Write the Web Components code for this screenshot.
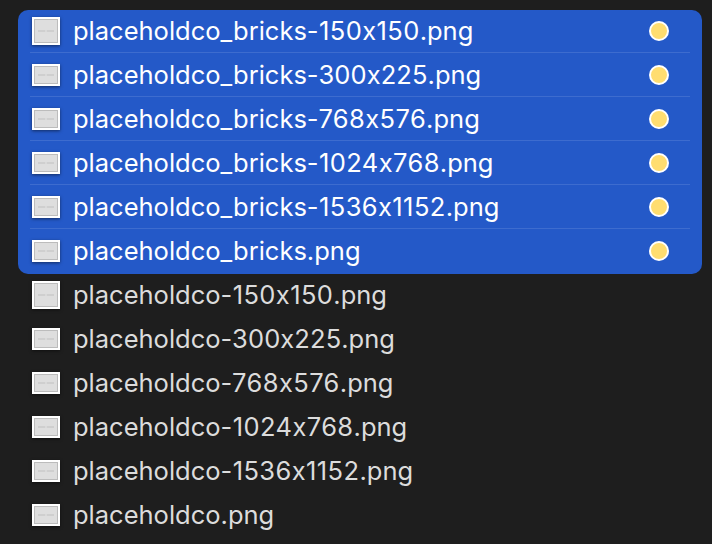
<!DOCTYPE html>
<html lang="en">
<head>
<meta charset="utf-8">
<title>Files</title>
<style>
  html, body { margin: 0; background: #1e1e1e; }
  body { font-family: "Inter", "Liberation Sans", sans-serif; overflow: hidden; }
  .dims { letter-spacing: .4px; }
</style>
</head>
<body>
<file-list>
  <file-group selected>
    <file-row shape="square" tagged>placeholdco_bricks<span class="dims">-150x150</span>.png</file-row>
    <file-row tagged>placeholdco_bricks<span class="dims" style="letter-spacing:.1px">-300x225</span>.png</file-row>
    <file-row tagged>placeholdco_bricks<span class="dims">-768x576</span>.png</file-row>
    <file-row tagged>placeholdco_bricks<span class="dims">-1024x768</span>.png</file-row>
    <file-row tagged>placeholdco_bricks<span class="dims">-1536x1152</span>.png</file-row>
    <file-row tagged last>placeholdco_bricks.png</file-row>
  </file-group>
  <file-group>
    <file-row shape="square" last>placeholdco<span class="dims">-150x150</span>.png</file-row>
    <file-row last>placeholdco<span class="dims" style="letter-spacing:.1px">-300x225</span>.png</file-row>
    <file-row last>placeholdco<span class="dims">-768x576</span>.png</file-row>
    <file-row last>placeholdco<span class="dims">-1024x768</span>.png</file-row>
    <file-row last>placeholdco<span class="dims">-1536x1152</span>.png</file-row>
    <file-row last>placeholdco.png</file-row>
  </file-group>
</file-list>
<script>
class FileList extends HTMLElement {
  constructor() {
    super();
    this.attachShadow({ mode: 'open' }).innerHTML = `
      <style>
        :host { display: block; padding: 10px 10px 0 18px; }
      </style>
      <slot></slot>`;
  }
}

class FileGroup extends HTMLElement {
  constructor() {
    super();
    this.attachShadow({ mode: 'open' }).innerHTML = `
      <style>
        :host { display: block; color: #dcdcdc; }
        :host([selected]) { background: #2459c8; border-radius: 10px; color: #fff; }
      </style>
      <slot></slot>`;
  }
}

class FileThumb extends HTMLElement {
  constructor() {
    super();
    this.attachShadow({ mode: 'open' }).innerHTML = `
      <style>
        :host {
          display: flex;
          box-sizing: border-box;
          width: 28px;
          height: 22px;
          border: 2px solid #fff;
          box-shadow: 0 1px 3px rgba(0, 0, 0, .5);
        }
        :host([shape="square"]) { height: 28px; }
        .paper {
          flex: 1;
          display: flex;
          align-items: center;
          justify-content: center;
          background: #dedede;
          border: 1px solid #bcbcbc;
        }
        .mark {
          width: 16px;
          height: 2px;
          background: repeating-linear-gradient(90deg, #cfcfcf 0 7px, #d9d9d9 7px 9px);
        }
      </style>
      <div class="paper"><div class="mark"></div></div>`;
  }
}

class FileRow extends HTMLElement {
  constructor() {
    super();
    this.attachShadow({ mode: 'open' }).innerHTML = `
      <style>
        :host {
          display: flex;
          align-items: center;
          box-sizing: border-box;
          height: 44px;
          padding: 0 12px 2px 14px;
          position: relative;
          font-size: 25.5px;
          font-feature-settings: "calt" 0;
        }
        .thumb-cell { width: 28px; display: flex; justify-content: center; margin-right: 13px; }
        .name { flex: 1; white-space: nowrap; padding-bottom: 1px; }
        .dot {
          display: none;
          box-sizing: border-box;
          width: 20px;
          height: 20px;
          margin-right: 21px;
          border-radius: 50%;
          background: #ffdd70;
          border: 2px solid #fff;
        }
        :host([tagged]) .dot { display: block; }
        .rule {
          position: absolute;
          left: 12px;
          right: 12px;
          bottom: 1px;
          height: 1px;
          background: #3d6ccf;
        }
        :host([last]) .rule { display: none; }
      </style>
      <div class="thumb-cell"><file-thumb></file-thumb></div>
      <span class="name"><slot></slot></span>
      <span class="dot"></span>
      <div class="rule"></div>`;
    if (this.getAttribute('shape')) {
      this.shadowRoot.querySelector('file-thumb').setAttribute('shape', this.getAttribute('shape'));
    }
  }
}

customElements.define('file-list', FileList);
customElements.define('file-group', FileGroup);
customElements.define('file-thumb', FileThumb);
customElements.define('file-row', FileRow);
</script>
</body>
</html>
